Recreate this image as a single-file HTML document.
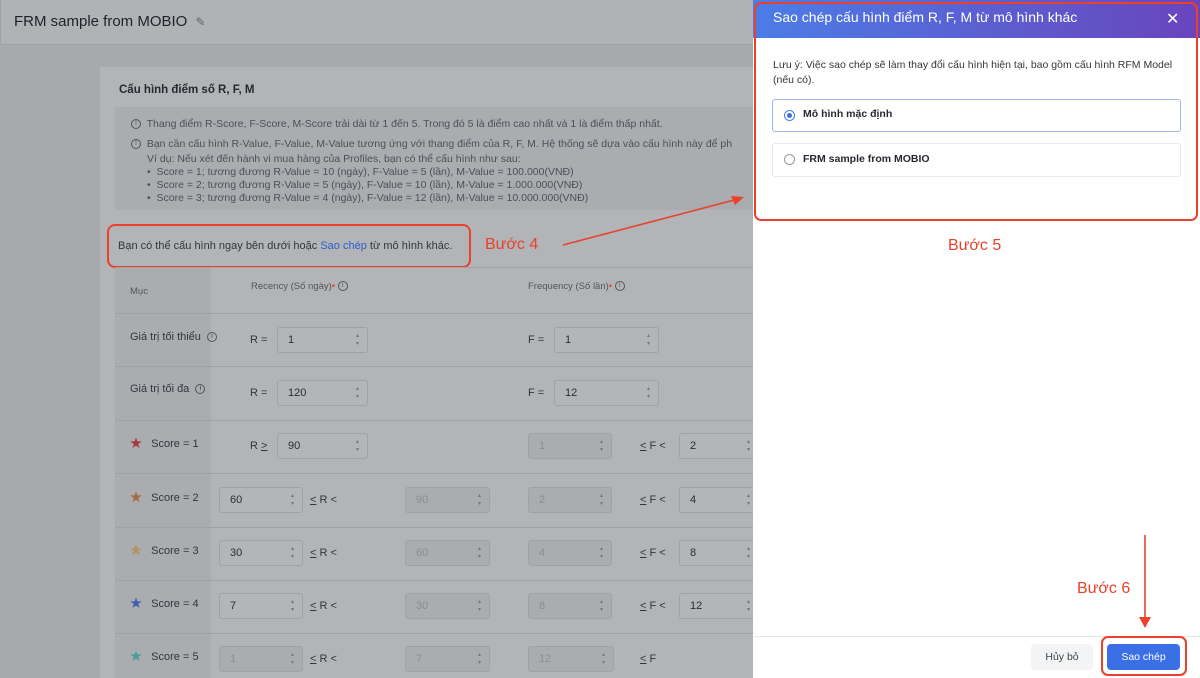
<!DOCTYPE html>
<html><head><meta charset="utf-8">
<style>
*{box-sizing:border-box;margin:0;padding:0}
body{width:1200px;height:678px;position:relative;overflow:hidden;background:#a7a9ad;font-family:"Liberation Sans","Noto Sans CJK SC",sans-serif;color:#2a2d33}
.a{position:absolute}
.top{left:0;top:0;width:753px;height:45px;background:#b0b2b5;border-bottom:1px solid #9fa1a5;border-left:1px solid #9fa1a5}
.card{left:100px;top:67px;width:653px;height:611px;background:#b2b4b7}
.info{left:115px;top:107px;width:638px;height:103px;background:#aaacb0;font-size:10.5px;color:#4d5057}
.tbl{left:115px;top:267px;width:638px;height:411px;border-top:1px solid #a0a2a6}
.lcol{left:115px;top:267px;width:96px;height:411px;background:#aaacb0}
.hl{left:115px;width:638px;height:1px;background:#9fa1a5}
.inp{height:26px;border:1px solid #a0a2a6;border-radius:3px;background:#b3b5b8;font-size:11px;padding:6px 10px;color:#2a2d33}
.dis{background:#aaacb0;color:#8b8d92}
.inp:after{content:"▴\A▾";white-space:pre;position:absolute;right:8px;top:4px;font-size:6px;line-height:8px;color:#777}
.t{font-size:11px;color:#33363c}
.star{font-size:12px}
.ic{display:inline-block;width:10px;height:10px;border:1px solid #555;border-radius:50%;font-size:7px;text-align:center;line-height:8px;vertical-align:middle}
.red{color:#e8412c}
</style></head><body>
<div class="a top"></div>
<div class="a" style="left:14px;top:13px;font-size:15px;color:#1f2228">FRM sample from MOBIO <span style="font-size:12px;color:#666;margin-left:4px">✎</span></div>
<div class="a card"></div>
<div class="a" style="left:119px;top:84px;font-size:11.5px;font-weight:bold;color:#26292f">Cấu hình điểm số R, F, M</div>
<div class="a info">
 <div class="a" style="left:16px;top:11px"><span class="ic">!</span>&nbsp; Thang điểm R-Score, F-Score, M-Score trải dài từ 1 đến 5. Trong đó 5 là điểm cao nhất và 1 là điểm thấp nhất.</div>
 <div class="a" style="left:16px;top:31px;white-space:nowrap"><span class="ic">!</span>&nbsp; Bạn cần cấu hình R-Value, F-Value, M-Value tương ứng với thang điểm của R, F, M. Hệ thống sẽ dựa vào cấu hình này để ph</div>
 <div class="a" style="left:32px;top:46px;line-height:13px">Ví dụ: Nếu xét đến hành vi mua hàng của Profiles, bạn có thể cấu hình như sau:<br>• &nbsp;Score = 1; tương đương R-Value = 10 (ngày), F-Value = 5 (lần), M-Value = 100.000(VNĐ)<br>• &nbsp;Score = 2; tương đương R-Value = 5 (ngày), F-Value = 10 (lần), M-Value = 1.000.000(VNĐ)<br>• &nbsp;Score = 3; tương đương R-Value = 4 (ngày), F-Value = 12 (lần), M-Value = 10.000.000(VNĐ)</div>
</div>
<div class="a" style="left:107px;top:224px;width:364px;height:44px;border:2px solid #e8412c;border-radius:8px"></div>
<div class="a t" style="left:118px;top:240px">Bạn có thể cấu hình ngay bên dưới hoặc <span style="color:#2f5ccc">Sao chép</span> từ mô hình khác.</div>
<div class="a red" style="left:485px;top:236px;font-size:16px">Bước 4</div>
<svg class="a" style="left:560px;top:190px" width="190" height="60"><line x1="3" y1="55" x2="178" y2="9" stroke="#e8412c" stroke-width="1.6"/><polygon points="184,7 171,6 175,15" fill="#e8412c"/></svg>
<div class="a lcol"></div>
<div class="a tbl"></div>
<div class="a hl" style="top:313px"></div><div class="a hl" style="top:366px"></div><div class="a hl" style="top:420px"></div><div class="a hl" style="top:473px"></div><div class="a hl" style="top:527px"></div><div class="a hl" style="top:580px"></div><div class="a hl" style="top:633px"></div>
<div class="a" style="left:130px;top:286px;font-size:9.5px;color:#555">Mục</div>
<div class="a" style="left:251px;top:281px;font-size:9.5px;color:#555">Recency (Số ngày)<span class="red">•</span> <span class="ic">i</span></div>
<div class="a" style="left:528px;top:281px;font-size:9.5px;color:#555">Frequency (Số lần)<span class="red">•</span> <span class="ic">i</span></div>
<div class="a t" style="left:130px;top:331px">Giá trị tối thiểu &nbsp;<span class="ic">i</span></div>
<div class="a t" style="left:130px;top:383px">Giá trị tối đa &nbsp;<span class="ic">i</span></div>
<div class="a t" style="left:250px;top:334px">R =</div><div class="a inp" style="left:277px;top:327px;width:91px">1</div>
<div class="a t" style="left:528px;top:334px">F =</div><div class="a inp" style="left:554px;top:327px;width:105px">1</div>
<div class="a t" style="left:250px;top:387px">R =</div><div class="a inp" style="left:277px;top:380px;width:91px">120</div>
<div class="a t" style="left:528px;top:387px">F =</div><div class="a inp" style="left:554px;top:380px;width:105px">12</div>

<div class="a t" style="left:130px;top:434px"><span class="star" style="color:#a2393f">★</span>&nbsp;&nbsp; Score = 1</div>
<div class="a t" style="left:250px;top:440px">R <u>&gt;</u></div><div class="a inp" style="left:277px;top:433px;width:91px">90</div>
<div class="a inp dis" style="left:528px;top:433px;width:84px">1</div><div class="a t" style="left:640px;top:440px"><u>&lt;</u> F &lt;</div><div class="a inp" style="left:679px;top:433px;width:80px">2</div>

<div class="a t" style="left:130px;top:488px"><span class="star" style="color:#a8683f">★</span>&nbsp;&nbsp; Score = 2</div>
<div class="a inp" style="left:219px;top:487px;width:84px">60</div><div class="a t" style="left:310px;top:494px"><u>&lt;</u> R &lt;</div><div class="a inp dis" style="left:405px;top:487px;width:85px">90</div>
<div class="a inp dis" style="left:528px;top:487px;width:84px">2</div><div class="a t" style="left:640px;top:494px"><u>&lt;</u> F &lt;</div><div class="a inp" style="left:679px;top:487px;width:80px">4</div>

<div class="a t" style="left:130px;top:541px"><span class="star" style="color:#b3925a">★</span>&nbsp;&nbsp; Score = 3</div>
<div class="a inp" style="left:219px;top:540px;width:84px">30</div><div class="a t" style="left:310px;top:547px"><u>&lt;</u> R &lt;</div><div class="a inp dis" style="left:405px;top:540px;width:85px">60</div>
<div class="a inp dis" style="left:528px;top:540px;width:84px">4</div><div class="a t" style="left:640px;top:547px"><u>&lt;</u> F &lt;</div><div class="a inp" style="left:679px;top:540px;width:80px">8</div>

<div class="a t" style="left:130px;top:594px"><span class="star" style="color:#3f5eab">★</span>&nbsp;&nbsp; Score = 4</div>
<div class="a inp" style="left:219px;top:593px;width:84px">7</div><div class="a t" style="left:310px;top:600px"><u>&lt;</u> R &lt;</div><div class="a inp dis" style="left:405px;top:593px;width:85px">30</div>
<div class="a inp dis" style="left:528px;top:593px;width:84px">8</div><div class="a t" style="left:640px;top:600px"><u>&lt;</u> F &lt;</div><div class="a inp" style="left:679px;top:593px;width:80px">12</div>

<div class="a t" style="left:130px;top:647px"><span class="star" style="color:#4a9c9a">★</span>&nbsp;&nbsp; Score = 5</div>
<div class="a inp dis" style="left:219px;top:646px;width:84px">1</div><div class="a t" style="left:310px;top:653px"><u>&lt;</u> R &lt;</div><div class="a inp dis" style="left:405px;top:646px;width:85px">7</div>
<div class="a inp dis" style="left:528px;top:646px;width:86px">12</div><div class="a t" style="left:640px;top:653px"><u>&lt;</u> F</div>

<!-- modal -->
<div class="a" style="left:753px;top:0;width:447px;height:678px;background:#fff"></div>
<div class="a" style="left:753px;top:0;width:447px;height:38px;background:linear-gradient(90deg,#4b7de6,#6a44bd)"></div>
<div class="a" style="left:773px;top:9px;font-size:14px;color:#fff">Sao chép cấu hình điểm R, F, M từ mô hình khác</div>
<div class="a" style="left:1166px;top:9px;font-size:16px;color:#fff">✕</div>
<div class="a" style="left:754px;top:2px;width:444px;height:219px;border:2px solid #e8412c;border-radius:7px"></div>
<div class="a" style="left:773px;top:58px;width:400px;font-size:10.5px;line-height:15px;color:#33363c">Lưu ý: Việc sao chép sẽ làm thay đổi cấu hình hiện tại, bao gồm cấu hình RFM Model (nếu có).</div>
<div class="a" style="left:772px;top:99px;width:409px;height:33px;border:1px solid #9db8ee;border-radius:3px"></div>
<div class="a" style="left:784px;top:110px;width:11px;height:11px;border:1px solid #4b7de6;border-radius:50%"><div class="a" style="left:2px;top:2px;width:5px;height:5px;border-radius:50%;background:#3a6fe6"></div></div>
<div class="a" style="left:803px;top:108px;font-size:10.5px;font-weight:bold;color:#26292f">Mô hình mặc định</div>
<div class="a" style="left:772px;top:143px;width:409px;height:34px;border:1px solid #e8e9ec;border-radius:3px"></div>
<div class="a" style="left:784px;top:154px;width:11px;height:11px;border:1px solid #999;border-radius:50%"></div>
<div class="a" style="left:803px;top:153px;font-size:10.5px;font-weight:bold;color:#26292f">FRM sample from MOBIO</div>
<div class="a red" style="left:948px;top:237px;font-size:16px">Bước 5</div>
<div class="a red" style="left:1077px;top:580px;font-size:16px">Bước 6</div>
<svg class="a" style="left:1138px;top:535px" width="14" height="95"><line x1="7" y1="0" x2="7" y2="84" stroke="#e8412c" stroke-width="1.6"/><polygon points="1,82 13,82 7,93" fill="#e8412c"/></svg>
<div class="a" style="left:753px;top:636px;width:447px;height:1px;background:#e6e7ea"></div>
<div class="a" style="left:1031px;top:644px;width:62px;height:26px;background:#f3f4f6;border-radius:4px;font-size:10.5px;text-align:center;line-height:26px;color:#444">Hủy bỏ</div>
<div class="a" style="left:1101px;top:636px;width:86px;height:40px;border:2px solid #e8412c;border-radius:7px"></div>
<div class="a" style="left:1107px;top:644px;width:73px;height:26px;background:#3a6fe6;border-radius:4px;font-size:10.5px;text-align:center;line-height:26px;color:#fff">Sao chép</div>
</body></html>
